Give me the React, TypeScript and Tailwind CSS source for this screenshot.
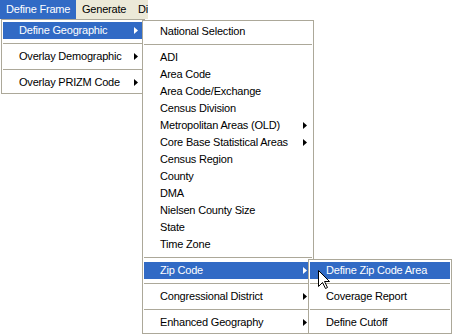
import React from "react";

type Entry = { label?: string; sub?: boolean; hi?: boolean; sep?: boolean };

function Arrow({ white }: { white?: boolean }) {
  return (
    <svg width="4" height="7" viewBox="0 0 4 7" className="block">
      <path d="M0 0 L4 3.5 L0 7 Z" fill={white ? "#ffffff" : "#000000"} />
    </svg>
  );
}

function Menu({ items, className }: { items: Entry[]; className: string }) {
  return (
    <div className={`absolute bg-white border border-[#ACA899] py-[2px] px-[1px] ${className}`}>
      {items.map((it, i) =>
        it.sep ? (
          <div key={i} className="h-[9px] flex items-center">
            <div className="h-px w-full bg-[#ACA899]" />
          </div>
        ) : (
          <div
            key={i}
            className={`h-[17px] flex items-center justify-between pl-[16px] pr-[5px] ${
              it.hi ? "bg-[#316AC5] text-white" : "text-black"
            }`}
          >
            <span className="whitespace-nowrap">{it.label}</span>
            {it.sub ? <Arrow white={it.hi} /> : null}
          </div>
        )
      )}
    </div>
  );
}

export default function App() {
  const menu1: Entry[] = [
    { label: "Define Geographic", sub: true, hi: true },
    { sep: true },
    { label: "Overlay Demographic", sub: true },
    { sep: true },
    { label: "Overlay PRIZM Code", sub: true },
  ];
  const menu2: Entry[] = [
    { label: "National Selection" },
    { sep: true },
    { label: "ADI" },
    { label: "Area Code" },
    { label: "Area Code/Exchange" },
    { label: "Census Division" },
    { label: "Metropolitan Areas (OLD)", sub: true },
    { label: "Core Base Statistical Areas", sub: true },
    { label: "Census Region" },
    { label: "County" },
    { label: "DMA" },
    { label: "Nielsen County Size" },
    { label: "State" },
    { label: "Time Zone" },
    { sep: true },
    { label: "Zip Code", sub: true, hi: true },
    { sep: true },
    { label: "Congressional District", sub: true },
    { sep: true },
    { label: "Enhanced Geography", sub: true },
  ];
  const menu3: Entry[] = [
    { label: "Define Zip Code Area", hi: true },
    { sep: true },
    { label: "Coverage Report" },
    { sep: true },
    { label: "Define Cutoff" },
  ];

  return (
    <div className="relative w-[454px] h-[334px] overflow-hidden bg-white font-['Liberation_Sans',Arial,sans-serif] text-[11px] leading-none tracking-[-0.2px]">
      <div className="flex h-[19px]">
        <div className="w-[76px] bg-[#316AC5] text-white pl-[6px] flex items-center">Define Frame</div>
        <div className="w-[72px] bg-[#ECE9D8] flex items-center overflow-hidden">
          <div className="w-[62px] shrink-0 pl-[6px]">Generate</div>
          <div className="shrink-0 whitespace-nowrap">Display</div>
        </div>
      </div>
      <Menu items={menu1} className="left-[1px] top-[19px] w-[144px]" />
      <Menu items={menu2} className="left-[142px] top-[20px] w-[172px]" />
      <Menu items={menu3} className="left-[308px] top-[259px] w-[144px]" />
      <svg
        className="absolute left-[318px] top-[270px]"
        width="13"
        height="20"
        viewBox="0 0 13 20"
      >
        <path
          d="M0.5 0.5 L0.5 16.5 L4.5 12.5 L7.5 18.5 L9.5 17.5 L6.5 11.5 L11.5 11.5 Z"
          fill="#ffffff"
          stroke="#000000"
          strokeWidth="1"
        />
      </svg>
    </div>
  );
}
